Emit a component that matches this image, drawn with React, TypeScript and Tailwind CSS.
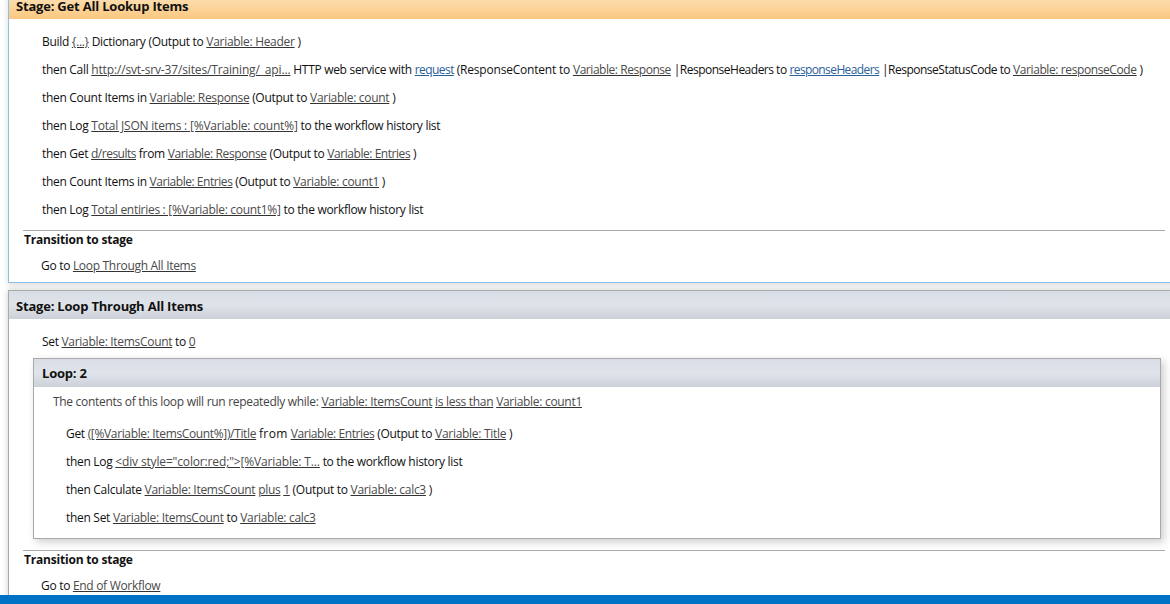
import React from "react";

const L = ({ children, blue, className = "" }: { children: React.ReactNode; blue?: boolean; className?: string }) => (
  <span className={(blue ? "underline text-[#2a6099] decoration-[#2a6099] " : "underline text-[#4a4a4a] decoration-[#333333] ") + className}>{children}</span>
);

const Row = ({ children, className = "" }: { children: React.ReactNode; className?: string }) => (
  <div className={"h-7 leading-[29px] whitespace-pre " + className}>{children}</div>
);

const Header = ({ title, className }: { title: string; className: string }) => (
  <div className={"h-7 flex items-center font-bold text-[13px] tracking-[-0.2px] text-[#111111] " + className}>{title}</div>
);

const Transition = ({ target }: { target: string }) => (
  <div className="mt-[7px] ml-[14px] mr-[7px] border-t border-[#aaaaaa]">
    <div className="h-[17px] flex items-center font-bold tracking-[-0.2px] text-[#111111] pl-px">Transition to stage</div>
    <Row className="pl-[18px] mt-[3px]">
      {"Go to "}
      <L>{target}</L>
    </Row>
  </div>
);

export default function App() {
  return (
    <div className="h-[604px] w-[1170px] overflow-hidden bg-white flex flex-col text-[12px] text-[#111111] font-['Open_Sans','Liberation_Sans',sans-serif] tracking-[-0.3px]">
      <div className="flex-1 min-h-0 overflow-hidden">
        <div className="mt-[-9px] ml-2 w-[1180px] h-[292px] border-l border-b border-r border-[#8cc1e8] shadow-[0_2px_6px_rgba(0,0,0,0.15)]">
          <Header title="Stage: Get All Lookup Items" className="pl-[7px] pt-[3px] bg-gradient-to-b from-[#fde6c0] to-[#fbc77e]" />
          <div className="pl-[33px] mt-[8px]">
            <Row>Build <L>{"{...}"}</L> Dictionary (Output to <L>Variable: Header</L> )</Row>
            <Row>then Call <L className="tracking-[-0.15px]">http://svt-srv-37/sites/Training/_api...</L> HTTP web service with <L blue className="tracking-[-0.55px]">request</L> <span className="tracking-[-0.2px]">(ResponseContent to</span> <L className="tracking-[-0.45px]">Variable: Response</L> <span className="tracking-[-0.5px]">|ResponseHeaders to</span> <L blue className="tracking-[-0.6px]">responseHeaders</L> <span className="tracking-[-0.5px]">|ResponseStatusCode to</span> <L className="tracking-[-0.4px]">Variable: responseCode</L> )</Row>
            <Row>then Count Items in <L className="tracking-[-0.35px]">Variable: Response</L> (Output to <L>Variable: count</L> )</Row>
            <Row>then Log <L className="tracking-[-0.2px]">Total JSON items : [%Variable: count%]</L> to the workflow history list</Row>
            <Row>then Get <L className="tracking-[-0.5px]">d/results</L> from <L className="tracking-[-0.4px]">Variable: Response</L> (Output to <L className="tracking-[-0.45px]">Variable: Entries</L> )</Row>
            <Row>then Count Items in <L className="tracking-[-0.45px]">Variable: Entries</L> (Output to <L>Variable: count1</L> )</Row>
            <Row>then Log <L>Total entiries : [%Variable: count1%]</L> to the workflow history list</Row>
          </div>
          <div className="mr-[15px]"><Transition target="Loop Through All Items" /></div>
        </div>
        <div className="mt-[7px] ml-2 w-[1180px] border border-[#aaaaaa] shadow-[0_0_6px_rgba(0,0,0,0.2)] pb-4">
          <Header title="Stage: Loop Through All Items" className="pl-[7px] pt-[3px] bg-gradient-to-b from-[#d9dde5] via-[#dfe3ea] to-[#ccd1d9]" />
          <Row className="pl-[33px] mt-2">Set <L>Variable: ItemsCount</L> to <L>0</L></Row>
          <div className="ml-6 mr-[19px] mt-[3px] w-[1128px] h-[181px] border border-[#aaaaaa] shadow-[3px_3px_8px_rgba(0,0,0,0.2)]">
            <Header title="Loop: 2" className="pl-2 pt-[2px] bg-gradient-to-b from-[#d9dde5] via-[#dfe3ea] to-[#ccd1d9]" />
            <Row className="pl-[19px] text-[#444444]">The contents of this loop will run repeatedly while: <L>Variable: ItemsCount</L> <L>is less than</L> <L>Variable: count1</L></Row>
            <div className="pl-[32px] mt-1">
              <Row>Get <L className="tracking-[-0.35px]">{"([%Variable: ItemsCount%])/Title"}</L> <span className="tracking-[0.4px]">from</span> <L className="tracking-[-0.4px]">Variable: Entries</L> (Output to <L>Variable: Title</L> )</Row>
              <Row>then Log <L className="tracking-[-0.15px]">{'<div style="color:red;">[%Variable: T...'}</L> to the workflow history list</Row>
              <Row>then Calculate <L>Variable: ItemsCount</L> <L>plus</L> <L>1</L> (Output to <L>Variable: calc3</L> )</Row>
              <Row>then Set <L>Variable: ItemsCount</L> to <L>Variable: calc3</L></Row>
            </div>
          </div>
          <div className="mr-[15px] mt-[11px]"><Transition target="End of Workflow" /></div>
        </div>
      </div>
      <div className="h-[9px] shrink-0 bg-[#0072c6]" />
    </div>
  );
}
